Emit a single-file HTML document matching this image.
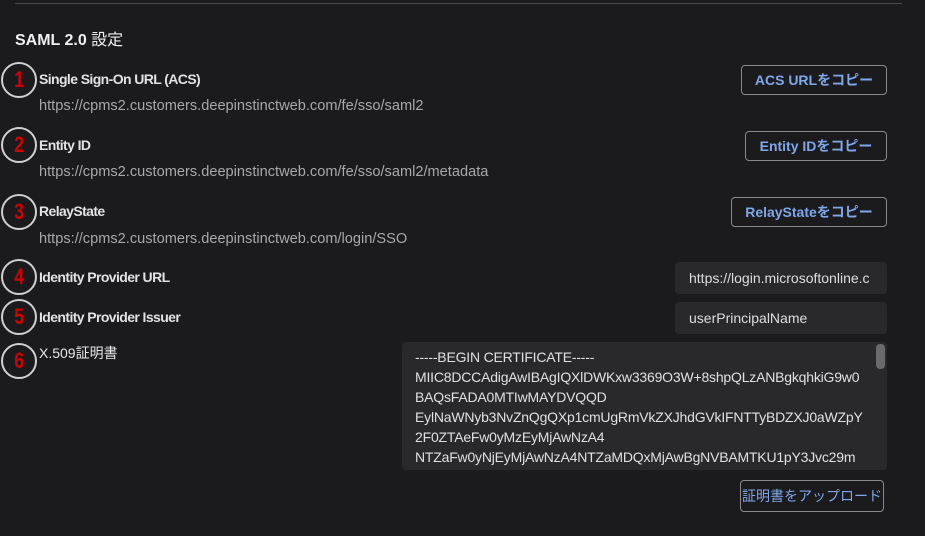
<!DOCTYPE html>
<html><head><meta charset="utf-8"><style>
body{margin:0;width:925px;height:536px;background:#1b1a1d;font-family:"Liberation Sans","Noto Sans CJK JP",sans-serif;position:relative;overflow:hidden;color:#e4e4e6}
.a{position:absolute;white-space:nowrap}
.hr{position:absolute;left:15px;top:3px;width:887px;height:1px;background:#4a494d}
.lbl{font-size:14px;font-weight:bold;color:#e2e2e4;letter-spacing:-0.6px}
.url{font-size:14.6px;color:#a9a8ad}
.c{position:absolute;left:1px;width:36px;height:36px;border:2px solid #d0d0d0;border-radius:50%;box-sizing:border-box;color:#d40000;font-size:22px;text-align:center;line-height:32px;font-family:"Liberation Sans",sans-serif}
.c span{display:inline-block;transform:scaleX(0.8);font-weight:bold}
.btn{position:absolute;height:30px;border:1px solid #8a898e;border-radius:4px;box-sizing:border-box;color:#7fa8ea;font-size:14px;font-weight:bold;text-align:center;line-height:28px}
.inp{position:absolute;left:675px;width:212px;height:32px;background:#29282c;border-radius:4px;font-size:14px;color:#dedee0;line-height:32px;padding-left:14px;box-sizing:border-box;overflow:hidden;white-space:nowrap}
.ta{position:absolute;left:402px;top:342px;width:485px;height:128px;background:#29282c;border-radius:4px;overflow:hidden;font-size:14px;color:#e0e0e2;line-height:20px;padding:5px 0 0 13px;box-sizing:border-box;letter-spacing:-0.2px}
.sb{position:absolute;left:876px;top:344px;width:9px;height:25px;background:#6a696d;border-radius:4px}
</style></head><body>
<div class="hr"></div>
<div class="a" style="left:15px;top:26px;font-size:16px;font-weight:bold;color:#f0f0f2">SAML 2.0 <span style="font-weight:normal">設定</span></div>

<div class="c" style="top:62px"><span>1</span></div>
<div class="a lbl" style="left:39px;top:71px">Single Sign-On URL (ACS)</div>
<div class="a url" style="left:39px;top:98px">https://cpms2.customers.deepinstinctweb.com/fe/sso/saml2</div>
<div class="btn" style="left:741px;top:65px;width:146px">ACS URLをコピー</div>

<div class="c" style="top:127px"><span>2</span></div>
<div class="a lbl" style="left:39px;top:137px">Entity ID</div>
<div class="a url" style="left:39px;top:164px">https://cpms2.customers.deepinstinctweb.com/fe/sso/saml2/metadata</div>
<div class="btn" style="left:745px;top:131px;width:142px">Entity IDをコピー</div>

<div class="c" style="top:194px"><span>3</span></div>
<div class="a lbl" style="left:39px;top:203px">RelayState</div>
<div class="a url" style="left:39px;top:231px">https://cpms2.customers.deepinstinctweb.com/login/SSO</div>
<div class="btn" style="left:731px;top:197px;width:156px">RelayStateをコピー</div>

<div class="c" style="top:259px"><span>4</span></div>
<div class="a lbl" style="left:39px;top:269px">Identity Provider URL</div>
<div class="inp" style="top:262px">https://login.microsoftonline.c</div>

<div class="c" style="top:299px"><span>5</span></div>
<div class="a lbl" style="left:39px;top:309px">Identity Provider Issuer</div>
<div class="inp" style="top:302px">userPrincipalName</div>

<div class="c" style="top:343px"><span>6</span></div>
<div class="a lbl" style="left:39px;top:343px;font-weight:normal;color:#e8e8ea;letter-spacing:0">X.509証明書</div>

<div class="ta">-----BEGIN CERTIFICATE-----<br>MIIC8DCCAdigAwIBAgIQXlDWKxw3369O3W+8shpQLzANBgkqhkiG9w0<br>BAQsFADA0MTIwMAYDVQQD<br>EylNaWNyb3NvZnQgQXp1cmUgRmVkZXJhdGVkIFNTTyBDZXJ0aWZpY<br>2F0ZTAeFw0yMzEyMjAwNzA4<br>NTZaFw0yNjEyMjAwNzA4NTZaMDQxMjAwBgNVBAMTKU1pY3Jvc29m</div>
<div class="sb"></div>
<div class="btn" style="left:740px;top:480px;width:144px;height:32px;line-height:30px;font-weight:normal;font-size:14px">証明書をアップロード</div>
</body></html>
